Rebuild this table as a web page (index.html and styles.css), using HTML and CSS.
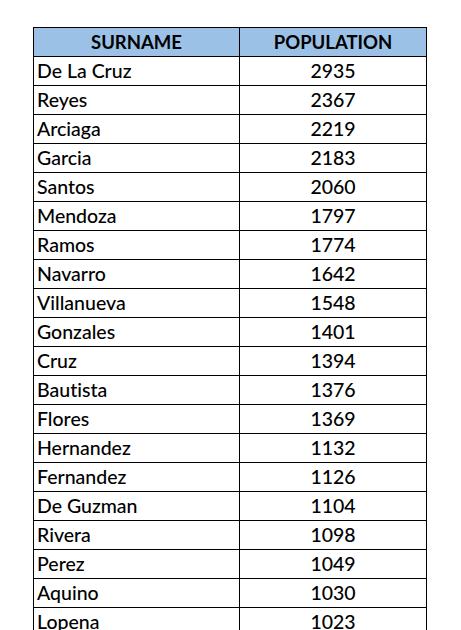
FILE: index.html
```html
<!DOCTYPE html>
<html>
<head>
<meta charset="utf-8">
<link rel="stylesheet" href="styles.css">
</head>
<body>
<table class="sheet">
  <thead>
    <tr><th class="col-name">SURNAME</th><th class="col-pop">POPULATION</th></tr>
  </thead>
  <tbody>
    <tr><td class="name">De La Cruz</td><td class="pop">2935</td></tr>
    <tr><td class="name">Reyes</td><td class="pop">2367</td></tr>
    <tr><td class="name">Arciaga</td><td class="pop">2219</td></tr>
    <tr><td class="name">Garcia</td><td class="pop">2183</td></tr>
    <tr><td class="name">Santos</td><td class="pop">2060</td></tr>
    <tr><td class="name">Mendoza</td><td class="pop">1797</td></tr>
    <tr><td class="name">Ramos</td><td class="pop">1774</td></tr>
    <tr><td class="name">Navarro</td><td class="pop">1642</td></tr>
    <tr><td class="name">Villanueva</td><td class="pop">1548</td></tr>
    <tr><td class="name">Gonzales</td><td class="pop">1401</td></tr>
    <tr><td class="name">Cruz</td><td class="pop">1394</td></tr>
    <tr><td class="name">Bautista</td><td class="pop">1376</td></tr>
    <tr><td class="name">Flores</td><td class="pop">1369</td></tr>
    <tr><td class="name">Hernandez</td><td class="pop">1132</td></tr>
    <tr><td class="name">Fernandez</td><td class="pop">1126</td></tr>
    <tr><td class="name">De Guzman</td><td class="pop">1104</td></tr>
    <tr><td class="name">Rivera</td><td class="pop">1098</td></tr>
    <tr><td class="name">Perez</td><td class="pop">1049</td></tr>
    <tr><td class="name">Aquino</td><td class="pop">1030</td></tr>
    <tr><td class="name">Lopena</td><td class="pop">1023</td></tr>
  </tbody>
</table>
</body>
</html>
```

FILE: styles.css
```css
html, body {
  margin: 0;
  padding: 0;
  background: #ffffff;
  overflow: hidden;
}
body {
  padding: 27px 0 0 33px;
  font-family: "Lato", "Open Sans", sans-serif;
  color: #000000;
  font-variant-ligatures: none;
}
.sheet {
  border-collapse: collapse;
  table-layout: fixed;
}
.sheet th,
.sheet td {
  border: 1px solid #000000;
  height: 29px;
  padding: 0 3px 4px 3px;
  font-size: 19.5px;
  line-height: 20px;
  vertical-align: bottom;
  box-sizing: border-box;
  white-space: nowrap;
}
.sheet td {
  font-weight: 500;
}
.sheet th {
  background: #9bc2e6;
  font-weight: bold;
  font-size: 18.5px;
  text-align: center;
}
.col-name { width: 206px; }
.col-pop { width: 187px; }
.name { text-align: left; }
.pop { text-align: center; }
```
